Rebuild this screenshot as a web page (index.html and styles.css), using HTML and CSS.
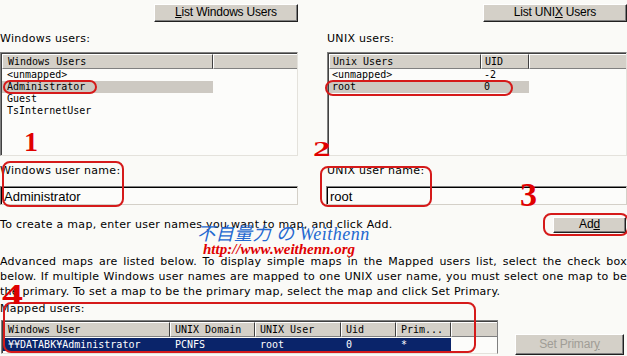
FILE: index.html
```html
<!DOCTYPE html>
<html>
<head lang="en">
    <meta charset="UTF-8">
    <title>User Name Mapping</title>
    <link rel="stylesheet" href="styles.css">
</head>
<body>
<div class="panes">
    <div class="pane pane-win">
        <div class="btn-row"><span class="btn btn-list"><u>L</u>ist Windows Users</span></div>
        <div class="caption">Windows users:</div>
        <div class="listbox">
            <div class="lv-head">
                <span class="col-win">Windows Users</span>
                <span class="col-fill"></span>
            </div>
            <div class="lv-row"><span class="col-win">&lt;unmapped&gt;</span></div>
            <div class="lv-row sel"><span class="col-win">Administrator</span></div>
            <div class="lv-row"><span class="col-win">Guest</span></div>
            <div class="lv-row"><span class="col-win">TsInternetUser</span></div>
        </div>
        <div class="caption caption-name">Windows user name:</div>
        <div class="field">Administrator</div>
    </div>
    <div class="pane pane-unix">
        <div class="btn-row"><span class="btn btn-list">List UNI<u>X</u> Users</span></div>
        <div class="caption">UNIX users:</div>
        <div class="listbox">
            <div class="lv-head">
                <span class="col-unix">Unix Users</span>
                <span class="col-uid">UID</span>
                <span class="col-fill"></span>
            </div>
            <div class="lv-row"><span class="col-unix">&lt;unmapped&gt;</span><span class="col-uid">-2</span></div>
            <div class="lv-row sel"><span class="col-unix">root</span><span class="col-uid">0</span></div>
        </div>
        <div class="caption caption-name">UNIX user name:</div>
        <div class="field">root</div>
    </div>
</div>

<div class="add-row">
    <span class="hint">To create a map, enter user names you want to map, and click Add.</span>
    <span class="btn btn-add">Ad<u>d</u></span>
</div>

<div class="advanced">
    <span class="line just">Advanced maps are listed below. To display simple maps in the Mapped users list, select the check box</span>
    <span class="line just">below. If multiple Windows user names are mapped to one UNIX user name, you must select one map to be</span>
    <span class="line">the primary. To set a map to be the primary map, select the map and click Set Primary.</span>
</div>

<div class="caption caption-mapped">Mapped users:</div>
<div class="mapped-row">
    <div class="listbox listbox-mapped">
        <div class="lv-head">
            <span class="col-m1">Windows User</span>
            <span class="col-m2">UNIX Domain</span>
            <span class="col-m3">UNIX User</span>
            <span class="col-m4">Uid</span>
            <span class="col-m5">Prim...</span>
            <span class="col-fill"></span>
        </div>
        <div class="lv-row active">
            <span class="col-m1">¥¥DATABK¥Administrator</span>
            <span class="col-m2">PCNFS</span>
            <span class="col-m3">root</span>
            <span class="col-m4">0</span>
            <span class="col-m5">*</span>
        </div>
    </div>
    <span class="btn btn-primary">Set Primar<u>y</u></span>
</div>

<!-- annotations drawn over the dialog -->
<div class="mark ring ring-admin"></div>
<div class="mark ring ring-root"></div>
<div class="mark ring ring-winname"></div>
<div class="mark ring ring-unixname"></div>
<div class="mark ring ring-add"></div>
<div class="mark ring ring-mapped"></div>
<span class="mark num num1">1</span>
<span class="mark num num2">2</span>
<span class="mark num num3">3</span>
<span class="mark num num4">4</span>
<span class="mark wm-title">不自量力 の Weithenn</span>
<span class="mark wm-url">http://www.weithenn.org</span>
</body>
</html>
```

FILE: styles.css
```css
html, body {
    margin: 0;
    padding: 0;
    overflow: hidden;
}

body {
    position: relative;
    width: 627px;
    height: 356px;
    background: #fafaf7;
    color: #000;
    font-family: "DejaVu Sans", sans-serif;
    font-size: 11px;
    letter-spacing: 0.3px;
}

u {
    text-decoration: underline;
}

/* buttons */
.btn {
    display: block;
    box-sizing: border-box;
    height: 18px;
    line-height: 15px;
    text-align: center;
    font-family: "Liberation Sans", sans-serif;
    font-size: 12px;
    letter-spacing: -0.2px;
    background: #d4d0c8;
    border: 1px solid;
    border-color: #fff #202020 #202020 #fff;
    box-shadow: inset -1px -1px #808080;
}

.btn-row {
    display: flex;
    justify-content: flex-end;
    padding-top: 4px;
}

.btn-list {
    width: 144px;
}

/* two upper panes */
.panes {
    display: flex;
    gap: 29px;
}

.pane-win {
    width: 298px;
}

.pane-unix {
    width: 300px;
}

.caption {
    height: 14px;
    line-height: 14px;
    margin-top: 10px;
}

.caption-name {
    margin-top: 8px;
}

/* list views */
.listbox {
    box-sizing: border-box;
    height: 104px;
    margin-top: 6px;
    padding: 1px 0 0 1px;
    background: #fcfcfa;
    border: 1px solid;
    border-color: #808080 #e4e2dc #e4e2dc #808080;
    box-shadow: inset 1px 1px #404040;
    font-family: "DejaVu Sans Mono", monospace;
    font-size: 10px;
    letter-spacing: 0;
    overflow: hidden;
}

.lv-head {
    display: flex;
    height: 15px;
}

.lv-head span {
    box-sizing: border-box;
    height: 15px;
    line-height: 13px;
    padding-left: 5px;
    background: #d4d0c8;
    border: 1px solid;
    border-color: #fff #404040 #808080 #fff;
}

.lv-head .col-fill {
    flex: 1;
    border-right: none;
}

.lv-row {
    display: flex;
    height: 12px;
    line-height: 12px;
}

.lv-row span {
    box-sizing: border-box;
    padding-left: 5px;
}

.lv-row.sel span {
    background: #cdc9c2;
}

.col-win {
    width: 211px;
}

.pane-unix .lv-head span,
.pane-unix .lv-row span {
    padding-left: 3px;
}

.col-unix {
    width: 152px;
}

.col-uid {
    width: 48px;
}

/* text fields */
.field {
    box-sizing: border-box;
    height: 19px;
    margin-top: 8px;
    padding: 2px 0 0 3px;
    line-height: 15px;
    font-family: "Liberation Sans", sans-serif;
    font-size: 13px;
    letter-spacing: 0;
    background: #fcfcfa;
    border: 1px solid;
    border-color: #808080 #d4d0c8 #d4d0c8 #808080;
    box-shadow: inset 1px 1px #000;
}

.pane-unix .field {
    margin-left: -1px;
}

/* add row */
.add-row {
    display: flex;
    align-items: center;
    justify-content: space-between;
    margin-top: 12px;
    height: 15px;
}

.btn-add {
    width: 73px;
    height: 16px;
    line-height: 13px;
    margin-right: 1px;
}

/* explanation */
.advanced {
    margin-top: 22px;
    line-height: 15px;
    letter-spacing: 0.25px;
}

.advanced .line {
    display: block;
    text-align: left;
}

.advanced .line.just {
    text-align: justify;
    text-align-last: justify;
}

.caption-mapped {
    margin-top: 3px;
}

/* mapped users */
.mapped-row {
    display: flex;
    align-items: flex-end;
    height: 35px;
    margin-top: 4px;
}

.listbox-mapped {
    width: 497px;
    height: 34px;
    margin: 0 0 1px 1px;
    border-right-color: #808080;
}

.col-m1 { width: 167px; }
.col-m2 { width: 85px; }
.col-m3 { width: 86px; }
.col-m4 { width: 55px; }
.col-m5 { width: 55px; }

.listbox-mapped .lv-head span {
    padding-left: 4px;
}

.lv-row.active {
    margin-top: 1px;
    height: 13px;
    line-height: 13px;
    color: #fff;
}

.lv-row.active span {
    background: #0a246a;
    padding-left: 5px;
}

.btn-primary {
    width: 109px;
    height: 21px;
    line-height: 18px;
    margin-left: 17px;
    color: #a09d96;
}

/* annotations */
.mark {
    position: absolute;
    letter-spacing: 0;
}

.ring {
    box-sizing: border-box;
    border: 2px solid #d51a1a;
    border-radius: 8px;
}

.ring-admin {
    left: 3px;
    top: 80px;
    width: 94px;
    height: 14px;
    border-radius: 7px;
}

.ring-root {
    left: 325px;
    top: 80px;
    width: 188px;
    height: 16px;
}

.ring-winname {
    left: 2px;
    top: 161px;
    width: 122px;
    height: 46px;
}

.ring-unixname {
    left: 320px;
    top: 166px;
    width: 112px;
    height: 41px;
}

.ring-add {
    left: 543px;
    top: 213px;
    width: 86px;
    height: 23px;
}

.ring-mapped {
    left: 3px;
    top: 302px;
    width: 473px;
    height: 51px;
}

.num {
    font-family: "Liberation Serif", serif;
    font-weight: bold;
    color: #e00000;
    line-height: 1;
    transform-origin: 0 0;
}

.num1 {
    left: 24px;
    top: 128px;
    font-size: 28px;
}

.num2 {
    left: 313px;
    top: 138px;
    font-size: 22px;
    transform: scaleX(1.6);
}

.num3 {
    left: 520px;
    top: 178px;
    font-size: 34px;
}

.num4 {
    left: 2px;
    top: 279px;
    font-size: 30px;
    transform: scaleX(1.4);
}

.wm-title {
    left: 197px;
    top: 224px;
    font-family: "Liberation Serif", "Noto Sans CJK JP", serif;
    font-style: italic;
    font-size: 18px;
    line-height: 20px;
    color: #2468d0;
    letter-spacing: 0.5px;
}

.wm-url {
    left: 203px;
    top: 241px;
    font-family: "Liberation Serif", serif;
    font-style: italic;
    font-weight: bold;
    font-size: 15px;
    line-height: 16px;
    color: #e00000;
}
```
